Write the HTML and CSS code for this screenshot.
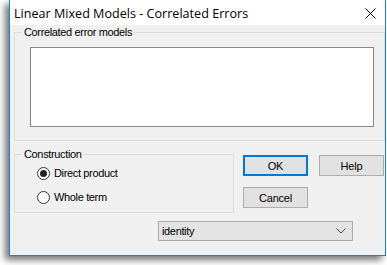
FILE: index.html
```html
<!DOCTYPE html>
<html>
<head>
<meta charset="utf-8">
<link rel="stylesheet" href="styles.css">
</head>
<body>
<div class="window">
  <div class="titlebar">
    <span class="title">Linear Mixed Models - Correlated Errors</span>
    <svg class="close" width="11" height="11" viewBox="0 0 11 11"><path d="M0.5 0.5 L10.5 10.5 M10.5 0.5 L0.5 10.5" stroke="#000" stroke-width="1" fill="none"/></svg>
  </div>
  <div class="content">
    <div class="group g1">
      <span class="legend">Correlated error models</span>
      <div class="listbox"></div>
    </div>
    <div class="row">
      <div class="group g2">
        <span class="legend">Construction</span>
        <label class="radio"><span class="circle checked"></span>Direct product</label>
        <label class="radio r2"><span class="circle"></span>Whole term</label>
      </div>
      <div class="buttons">
        <button class="btn default">OK</button>
        <button class="btn">Help</button>
        <button class="btn">Cancel</button>
      </div>
    </div>
    <div class="dd-row">
      <div class="dropdown">
        <span>identity</span>
        <svg width="10" height="6" viewBox="0 0 10 6"><path d="M0.5 0.5 L5 5 L9.5 0.5" stroke="#444" stroke-width="1" fill="none"/></svg>
      </div>
    </div>
  </div>
</div>
</body>
</html>
```
FILE: styles.css
```css
html, body {
  margin: 0;
  padding: 0;
  background: #fff;
}
body {
  width: 387px;
  height: 265px;
  overflow: hidden;
  font-family: "Liberation Sans", Arial, sans-serif;
  font-size: 11px;
  letter-spacing: -0.35px;
  color: #000;
}
.window {
  margin-left: 9px;
  width: 375px;
  height: 255px;
  border: 1px solid #1883d7;
  border-top: none;
  background: #f0f0f0;
  box-shadow: -4px 4px 7px rgba(0,0,0,0.55);
  display: flex;
  flex-direction: column;
}
.titlebar {
  height: 25px;
  background: #fff;
  display: flex;
  align-items: center;
  justify-content: space-between;
  padding: 0 9px 0 4px;
  flex: none;
}
.title {
  font-family: "Open Sans", "Noto Sans", sans-serif;
  font-size: 12.6px;
  letter-spacing: 0;
  padding-top: 1px;
}
.close {
  display: block;
  margin-top: 2px;
}
.content {
  flex: 1;
  padding: 7px 1px 0 4px;
  display: flex;
  flex-direction: column;
}
.group {
  border: 1px solid #dcdcdc;
  box-sizing: border-box;
  display: flex;
  flex-direction: column;
}
.legend {
  align-self: flex-start;
  margin: -7px 0 0 7px;
  padding: 0 2px;
  background: #f0f0f0;
  line-height: 13px;
  height: 13px;
}
.g1 {
  width: 371px;
  height: 109px;
}
.listbox {
  margin: 8px 0 0 15px;
  width: 344px;
  height: 80px;
  box-sizing: border-box;
  background: #fff;
  border: 1px solid #828790;
}
.row {
  display: flex;
  margin-top: 13px;
}
.g2 {
  width: 220px;
  height: 59px;
}
.radio {
  display: flex;
  align-items: center;
  margin-left: 22px;
  height: 14px;
  margin-top: 5px;
}
.radio.r2 {
  margin-top: 10px;
}
.circle {
  width: 13px;
  height: 13px;
  box-sizing: border-box;
  border: 1px solid #333;
  border-radius: 50%;
  background: #fff;
  margin-right: 4px;
  position: relative;
}
.circle.checked::after {
  content: "";
  position: absolute;
  left: 2px;
  top: 2px;
  width: 7px;
  height: 7px;
  border-radius: 50%;
  background: #222;
}
.buttons {
  display: grid;
  grid-template-columns: 65px 65px;
  grid-auto-rows: 21px;
  column-gap: 11px;
  row-gap: 11px;
  margin-left: 9px;
  margin-top: 1px;
}
.btn {
  font-family: "Liberation Sans", Arial, sans-serif;
  font-size: 11px;
  letter-spacing: -0.2px;
  color: #000;
  background: #e1e1e1;
  border: 1px solid #adadad;
  margin: 0;
  padding: 0;
  box-sizing: border-box;
}
.btn.default {
  border: 2px solid #0078d7;
}
.dd-row {
  display: flex;
  margin-top: 8px;
  padding-left: 144px;
}
.dropdown {
  width: 195px;
  height: 20px;
  box-sizing: border-box;
  background: #e3e3e3;
  border: 1px solid #adadad;
  display: flex;
  align-items: center;
  justify-content: space-between;
  padding: 0 6px 0 3px;
}
.dropdown svg {
  display: block;
}
```
